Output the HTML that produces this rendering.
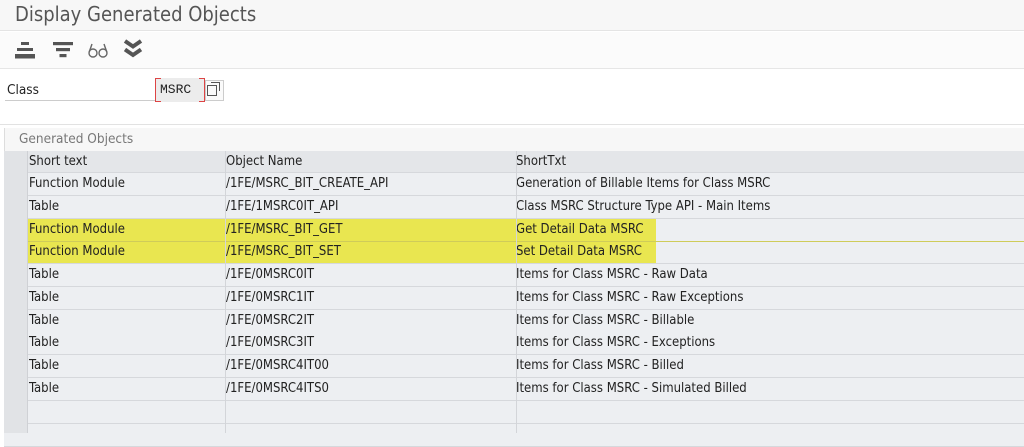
<!DOCTYPE html>
<html><head><style>
*{margin:0;padding:0;box-sizing:border-box}
body{width:1024px;height:433px;overflow:hidden;background:#fff;font-family:"DejaVu Sans Condensed","Liberation Sans",sans-serif;font-size:13px;color:#222;position:relative}
.abs{position:absolute}
.title{left:0;top:0;width:1024px;height:31px;background:#f7f7f7;border-bottom:1px solid #e4e4e4}
.title span{position:absolute;left:15px;top:2px;font-size:20px;color:#555;font-family:"DejaVu Sans Condensed",sans-serif}
.tb{left:0;top:32px;width:1024px;height:37px;background:#fbfbfb;border-bottom:1px solid #e6e6e6}
.row{position:absolute;left:4px;width:1020px;height:23px;background:#edeff2;border-bottom:1px solid #d6d8dc}
.c{position:absolute;top:3px;white-space:nowrap}
.v{position:absolute;top:151px;bottom:0;width:1px;background:#d3d5d9}
</style></head><body>
<div class="abs title"><span>Display Generated Objects</span></div>
<div class="abs tb">
<svg class="abs" style="left:14px;top:6px" width="140" height="24">
<g fill="#555"><rect x="7" y="4" width="8" height="3"/><rect x="3" y="10" width="16" height="3"/><rect x="1" y="16" width="20" height="4.5"/>
<rect x="39" y="4" width="20" height="3.2"/><rect x="42" y="10" width="14" height="3.2"/><rect x="45.5" y="16" width="7" height="3.2"/></g>
<g fill="none" stroke="#666" stroke-width="1.4"><circle cx="79" cy="15" r="4"/><circle cx="89" cy="15" r="4"/><path d="M75.2 14 L78 6 M92.8 14 L90 6"/></g>
<g fill="none" stroke="#555" stroke-width="4"><path d="M111 3 L119 8.5 L127 3 M111 11.5 L119 17 L127 11.5"/></g>
</svg></div>
<div class="abs" style="left:7px;top:82px;font-size:13.5px">Class</div>
<div class="abs" style="left:5px;top:100px;width:150px;height:1px;background:#ccc"></div>
<div class="abs" style="left:156px;top:78px;width:48px;height:24px;background:#ececec;font-family:'Liberation Mono',monospace;font-size:13px;padding:4px 0 0 4px">MSRC</div>
<div class="abs" style="left:155px;top:78px;width:6px;height:24px;border:1px solid #d44;border-right:0"></div>
<div class="abs" style="left:199px;top:78px;width:6px;height:24px;border:1px solid #d44;border-left:0"></div>
<div class="abs" style="left:205px;top:80px;width:19px;height:21px;border:1px solid #ccc;background:#fafafa"></div>
<div class="abs" style="left:207px;top:85px;width:10px;height:11px;border:1.3px solid #555"></div>
<div class="abs" style="left:211px;top:82px;width:9px;height:9px;border-top:1.3px solid #555;border-right:1.3px solid #555"></div>
<div class="abs" style="left:0;top:124px;width:1024px;height:1px;background:#e2e2e2"></div>
<div class="abs" style="left:4px;top:128px;width:1020px;height:23px;background:#f7f7f7;border-left:1px solid #ddd"></div>
<div class="abs" style="left:19px;top:131px;color:#777;font-size:13.5px">Generated Objects</div>
<div class="row" style="top:151px;background:#e4e6e9;height:22px"><div class="c" style="left:25px">Short text</div><div class="c" style="left:222px">Object Name</div><div class="c" style="left:512px">ShortTxt</div></div>
<div class="row" style="top:173px"><div class="c" style="left:25px">Function Module</div><div class="c" style="left:222px">/1FE/MSRC_BIT_CREATE_API</div><div class="c" style="left:512px">Generation of Billable Items for Class MSRC</div></div>
<div class="row" style="top:196px"><div class="c" style="left:25px">Table</div><div class="c" style="left:222px">/1FE/1MSRC0IT_API</div><div class="c" style="left:512px">Class MSRC Structure Type API - Main Items</div></div>
<div class="abs" style="left:656px;top:219px;width:368px;height:45px;background:#edeff2"></div>
<div class="abs" style="left:24px;top:219px;width:632px;height:45px;background:#e9e650"></div>
<div class="row" style="top:219px;background:transparent;border-color:#cfcc5a"><div class="c" style="left:25px">Function Module</div><div class="c" style="left:222px">/1FE/MSRC_BIT_GET</div><div class="c" style="left:512px">Get Detail Data MSRC</div></div>
<div class="row" style="top:241px;background:transparent"><div class="c" style="left:25px">Function Module</div><div class="c" style="left:222px">/1FE/MSRC_BIT_SET</div><div class="c" style="left:512px">Set Detail Data MSRC</div></div>
<div class="row" style="top:264px"><div class="c" style="left:25px">Table</div><div class="c" style="left:222px">/1FE/0MSRC0IT</div><div class="c" style="left:512px">Items for Class MSRC - Raw Data</div></div>
<div class="row" style="top:287px"><div class="c" style="left:25px">Table</div><div class="c" style="left:222px">/1FE/0MSRC1IT</div><div class="c" style="left:512px">Items for Class MSRC - Raw Exceptions</div></div>
<div class="row" style="top:310px"><div class="c" style="left:25px">Table</div><div class="c" style="left:222px">/1FE/0MSRC2IT</div><div class="c" style="left:512px">Items for Class MSRC - Billable</div></div>
<div class="row" style="top:332px"><div class="c" style="left:25px">Table</div><div class="c" style="left:222px">/1FE/0MSRC3IT</div><div class="c" style="left:512px">Items for Class MSRC - Exceptions</div></div>
<div class="row" style="top:355px"><div class="c" style="left:25px">Table</div><div class="c" style="left:222px">/1FE/0MSRC4IT00</div><div class="c" style="left:512px">Items for Class MSRC - Billed</div></div>
<div class="row" style="top:378px"><div class="c" style="left:25px">Table</div><div class="c" style="left:222px">/1FE/0MSRC4ITS0</div><div class="c" style="left:512px">Items for Class MSRC - Simulated Billed</div></div>
<div class="row" style="top:401px"></div>
<div class="row" style="top:424px"></div>
<div class="abs" style="left:4px;top:151px;width:24px;height:282px;background:#e1e3e6;border-right:1px solid #cfd1d5"></div>
<div class="v" style="left:225px"></div>
<div class="v" style="left:516px"></div>
</body></html>
